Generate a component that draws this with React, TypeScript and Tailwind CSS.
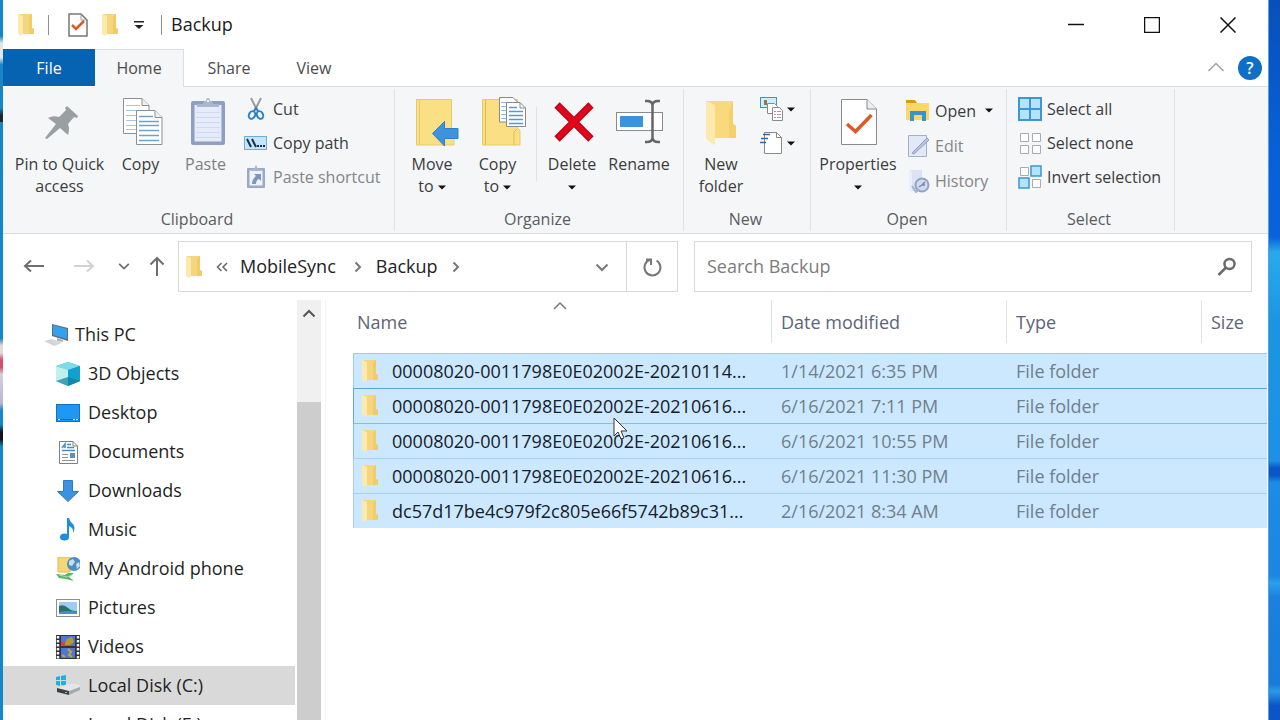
import { useState } from 'react';
import type { ReactNode } from 'react';

interface Entry {
  id: string;
  name: string;
  modified: string;
  line: string;
}

interface Place {
  label: string;
  icon: ReactNode;
}

const entries: Entry[] = [
  { id: 'a', name: '00008020-0011798E0E02002E-20210114...', modified: '1/14/2021 6:35 PM', line: 'border-[#99cbf0]' },
  { id: 'b', name: '00008020-0011798E0E02002E-20210616...', modified: '6/16/2021 7:11 PM', line: 'border-[#62a6dd]' },
  { id: 'c', name: '00008020-0011798E0E02002E-20210616...', modified: '6/16/2021 10:55 PM', line: 'border-[#80bfe8]' },
  { id: 'd', name: '00008020-0011798E0E02002E-20210616...', modified: '6/16/2021 11:30 PM', line: 'border-[#a9cdf2]' },
  { id: 'e', name: 'dc57d17be4c979f2c805e66f5742b89c31...', modified: '2/16/2021 8:34 AM', line: 'border-[#a9cdf2]' },
];

function FolderIcon({ className }: { className: string }) {
  return (
    <svg viewBox="0 0 16 22" className={className} aria-hidden="true">
      <path d="M1 0h13v14l2 1v5H4z" fill="#f6d67c" />
      <path d="M14 0v14l2 1v5h-5V3z" fill="#f0cb69" />
      <path d="M0 0l5 2v18l-2 2-3-2z" fill="#fce9ae" />
    </svg>
  );
}

function BigIcon({ children }: { children: ReactNode }) {
  return (
    <svg viewBox="-4 0 56 50" className="w-14 h-[50px] shrink-0" aria-hidden="true">
      {children}
    </svg>
  );
}

function SmallIcon({ children }: { children: ReactNode }) {
  return (
    <svg viewBox="0 0 24 24" className="w-6 h-6 shrink-0" aria-hidden="true">
      {children}
    </svg>
  );
}

function Caret() {
  return (
    <svg viewBox="0 0 8 5" className="w-2 h-[5px] inline-block" aria-hidden="true">
      <path d="M0 0.500h8L4 4.500z" fill="#111" />
    </svg>
  );
}

const pinIcon = (
  <BigIcon>
    <path
      d="M31 9L42 19l-1 2-3-1-6 7q2 5 0 11l-8-7L11 42l-2-1 11-14-8-6q5-3 11-1l7-7-1-2z"
      fill="#9a9fa2"
    />
  </BigIcon>
);

const copyIcon = (
  <BigIcon>
    <path d="M6.500 1.500H25l7 7V36.500H6.500z" fill="#fff" stroke="#8c8f93" />
    <path d="M25 1.500v7h7" fill="#eef0f2" stroke="#8c8f93" />
    <path d="M9 8.500h14M9 13.500h14M9 18.500h12M9 23.500h12M9 28.500h12M9 32.500h10" stroke="#a9c4df" />
    <path d="M19.500 13.500H38l7 7V47.500H19.500z" fill="#fff" stroke="#8c8f93" />
    <path d="M38 13.500v7h7" fill="#eef0f2" stroke="#8c8f93" />
    <path d="M22 19.500h14M22 24.500h20M22 28.500h20M22 33.500h20M22 38.500h20M22 43.500h20" stroke="#6ba3cf" strokeWidth="1.500" />
  </BigIcon>
);

const pasteIcon = (
  <BigIcon>
    <rect x="9" y="4" width="34" height="44" rx="2" fill="#8f9fc0" />
    <rect x="12.500" y="8" width="27" height="36.500" fill="#e6ebf9" />
    <path d="M14 15.500h24M14 20.500h24M14 25.500h24M14 30.500h24M14 35.500h24M14 40.500h24" stroke="#cfd8f0" />
    <path d="M15 10V7h6q0-3 3-3 0-3 2-3t2 3q3 0 3 3h6v3z" fill="#a9b6d2" />
    <circle cx="26" cy="4" r="1.200" fill="#f0f3fa" />
  </BigIcon>
);

const moveIcon = (
  <BigIcon>
    <path d="M8.500 2.500h35v29l2.500 2V48H8.500z" fill="#fbdf84" stroke="#eac968" />
    <path d="M11.500 3v45M36 48V35l3-2" stroke="#eccb67" fill="none" />
    <path d="M24.500 36.500L36.500 24.500v7H50v10H36.500v7.500z" fill="#3d94dd" stroke="#2f7fc6" />
  </BigIcon>
);

const copyToIcon = (
  <BigIcon>
    <path d="M8.500 2.500h35v29l2.500 2V48H8.500z" fill="#fbdf84" stroke="#eac968" />
    <path d="M11.500 3v45M40 48V35l3-3" stroke="#e4bc4c" fill="none" />
    <path d="M25.500 0.500H39l5 5v19.500H25.500z" fill="#fff" stroke="#86898d" />
    <path d="M27 5.500h9M27 9.500h9M27 13.500h9M27 17.500h9M27 21.500h9" stroke="#8db9e0" />
    <path d="M32.500 5.500H46l5.500 5.500v18.500h-19z" fill="#fff" stroke="#86898d" />
    <path d="M46 5.500V11h5.500" fill="none" stroke="#86898d" />
    <path d="M35 10.500h8M35 14.500h14M35 18.500h14M35 22.500h14M35 26.500h14" stroke="#4f9bd9" strokeWidth="1.500" />
  </BigIcon>
);

const deleteIcon = (
  <BigIcon>
    <path d="M9 8l34 34M43 8L9 42" stroke="#b8061b" strokeWidth="7.500" />
    <path d="M10 9l32 32M42 9L10 41" stroke="#e3061a" strokeWidth="5" />
  </BigIcon>
);

const renameIcon = (
  <BigIcon>
    <rect x="1.500" y="15.500" width="46" height="18" fill="#fff" stroke="#8a8a8a" />
    <rect x="5" y="19" width="23" height="11" fill="#3a93e0" />
    <path d="M30 4h2q5 0 5.500 4v33q-0.500 4-5.500 4h-2M45 4h-2q-5 0-5.500 4v33q0.500 4 5.500 4h2" stroke="#666" strokeWidth="2.500" fill="none" />
  </BigIcon>
);

const newFolderIcon = (
  <BigIcon>
    <path d="M9 4h27v23l3 2v12H17z" fill="#f8d97c" />
    <path d="M32 12l4-8v23l3 2v12h-7z" fill="#f3d06c" />
    <path d="M9 4l9 4v39l-1 1-8-6z" fill="#fdeaac" />
  </BigIcon>
);

const propertiesIcon = (
  <BigIcon>
    <path d="M7.500 2.500H33l9.500 9.500v35.500h-35z" fill="#fff" stroke="#8a8a8a" />
    <path d="M33 2.500V12h9.500" fill="#eee" stroke="#8a8a8a" />
    <path d="M13 27l8.500 7.500L37.500 18" stroke="#dd5a28" strokeWidth="3.500" fill="none" />
  </BigIcon>
);

const cutIcon = (
  <SmallIcon>
    <path d="M7 1l6 12M17 1l-6 12" stroke="#9a9da1" strokeWidth="2" />
    <ellipse cx="8" cy="18" rx="3" ry="4" transform="rotate(25 8 18)" fill="none" stroke="#2b82c4" strokeWidth="2" />
    <ellipse cx="16" cy="18" rx="3" ry="4" transform="rotate(-25 16 18)" fill="none" stroke="#2b82c4" strokeWidth="2" />
    <path d="M10 14l2-3 2 3" stroke="#2b82c4" strokeWidth="2" fill="none" />
  </SmallIcon>
);

const copyPathIcon = (
  <SmallIcon>
    <rect x="0.500" y="5.500" width="22" height="13" fill="#c5e5fa" stroke="#6aaede" />
    <path d="M3 8l4 8M8 8l4 8" stroke="#16324a" strokeWidth="2" />
    <path d="M13 15h2M16 15h2M19 15h2" stroke="#16324a" strokeWidth="2" />
  </SmallIcon>
);

const pasteShortcutIcon = (
  <SmallIcon>
    <rect x="3" y="3" width="18" height="20" rx="1" fill="#9aa9c6" />
    <rect x="5.500" y="5.500" width="13" height="15" fill="#eef2fc" />
    <path d="M7 6V4h3l2-4 2 4h3v2z" fill="#a9b6d2" />
    <path d="M10 9h7v7l-2-2q-3 1-3 5H8q0-5 4-8z" fill="#8195bb" />
  </SmallIcon>
);

const newItemIcon = (
  <SmallIcon>
    <rect x="0.500" y="0.500" width="16" height="10" fill="#d3ebfb" stroke="#4b8fc5" />
    <path d="M4 3h3v5H4z" fill="#8b7b4a" />
    <path d="M7.500 6.500h7l3 3v7h-10z" fill="#fff" stroke="#8a8a8a" />
    <path d="M12.500 10.500h7l3 3v10h-10z" fill="#fff" stroke="#8a8a8a" />
    <path d="M14 14.500h2M17 14.500h4M14 17.500h2M17 17.500h4M14 20.500h2M17 20.500h4" stroke="#c48aa6" />
  </SmallIcon>
);

const easyAccessIcon = (
  <SmallIcon>
    <path d="M4.500 1.500h12l5 5v16h-17z" fill="#fff" stroke="#8a8a8a" />
    <path d="M16.500 1.500v5h5" fill="none" stroke="#8a8a8a" />
    <path d="M3 3.500h7M1 7.500h7M0 11.500h6" stroke="#2b6cab" strokeWidth="1.500" />
  </SmallIcon>
);

const openIcon = (
  <SmallIcon>
    <path d="M0 2h9l2 2h12v17H0z" fill="#fbd766" />
    <path d="M0 1h9l2 3H0z" fill="#d99a17" />
    <path d="M4 22V12h16v10h-4v-6H8v6z" fill="#3d93c9" />
  </SmallIcon>
);

const editIcon = (
  <SmallIcon>
    <path d="M2.500 1.500h18v21h-18z" fill="#e2e8f8" stroke="#a3b0cc" />
    <path d="M6 19L21 4l2 2L8 20z" fill="#b9c5e0" stroke="#8f9fc2" />
  </SmallIcon>
);

const historyIcon = (
  <SmallIcon>
    <path d="M3 1h13v21H3z" fill="#dbe2f4" />
    <path d="M3 1l3 2v21l-3-3z" fill="#eaeffb" />
    <circle cx="16" cy="16" r="6.500" fill="#d0d9ee" stroke="#93a3c5" strokeWidth="2" />
    <path d="M13 18l3-2 3-3M16 16h3" stroke="#7688b2" strokeWidth="1.500" fill="none" />
    <path d="M6 17l4 6 3-3" fill="none" stroke="#a4b2d2" strokeWidth="2" />
  </SmallIcon>
);

const selectAllIcon = (
  <SmallIcon>
    <rect x="0" y="0" width="24" height="24" fill="#3c97d3" />
    <path d="M2 2h9v9H2zM13 2h9v9h-9zM2 13h9v9H2zM13 13h9v9h-9z" fill="#b5e2fd" />
  </SmallIcon>
);

const selectNoneIcon = (
  <SmallIcon>
    <path d="M2.500 2.500h8v8h-8zM14.500 2.500h8v8h-8zM2.500 14.500h8v8h-8zM14.500 14.500h8v8h-8z" fill="#fff" stroke="#a9abad" />
  </SmallIcon>
);

const invertIcon = (
  <SmallIcon>
    <path d="M2.500 2.500h8v8h-8zM14.500 14.500h8v8h-8z" fill="#fff" stroke="#a9abad" />
    <path d="M13 1h10v10H13zM1 13h10v10H1z" fill="#b5e2fd" stroke="#3c97d3" strokeWidth="1.500" />
  </SmallIcon>
);

const places: Place[] = [
  {
    label: '3D Objects',
    icon: (
      <>
        <path d="M12 0l12 4v15l-12 5L0 19V4z" fill="#27b1d3" />
        <path d="M12 0l12 4-12 4L0 4z" fill="#7fdbe8" />
        <path d="M0 4l12 4v16L0 19z" fill="#bff0ef" />
        <path d="M12 8l12-4v15l-12 5z" fill="#14a0cf" />
        <path d="M0 19l12-4 12 4-12 5z" fill="#0c7f9c" opacity="0.700" />
      </>
    ),
  },
  {
    label: 'Desktop',
    icon: (
      <>
        <rect x="0.500" y="3.500" width="23" height="17" fill="#1e97f5" stroke="#1771b8" />
        <path d="M1 18.500h22" stroke="#1267ad" />
        <path d="M2 18.500h2M17 18.500h2M20 18.500h2" stroke="#cfeaff" />
      </>
    ),
  },
  {
    label: 'Documents',
    icon: (
      <>
        <path d="M3.500 1.500H17l4.500 4.500v17.500h-18z" fill="#fff" stroke="#7d8184" />
        <path d="M17 1.500V6h4.500" fill="none" stroke="#7d8184" />
        <path d="M6 8l3-4v4M11 4.500h4M11 7.500h7M6 10.500h13" stroke="#3b8fd0" strokeWidth="1.500" fill="none" />
        <path d="M6 14.500h6M6 17.500h6M6 20.500h13" stroke="#8e9396" />
        <path d="M14 13h5v5h-5z" fill="#5a8fbd" />
      </>
    ),
  },
  {
    label: 'Downloads',
    icon: <path d="M7.500 1.500h9v11h6L12 22.500 1.500 12.500h6z" fill="#3d91e0" stroke="#2f79c3" />,
  },
  {
    label: 'Music',
    icon: (
      <>
        <path d="M11 0h2q1 4 4 6 3 4 0 9 1-5-4-7v11h-2z" fill="#1b8fdb" />
        <ellipse cx="8.500" cy="19" rx="4.500" ry="3.500" fill="#1b8fdb" />
      </>
    ),
  },
  {
    label: 'My Android phone',
    icon: (
      <>
        <path d="M2 0h12v15H2z" fill="#f6d778" stroke="#dfb84c" />
        <circle cx="18" cy="7" r="7" fill="#4a8fc2" />
        <path d="M13 4l4-2 2 3-3 4-3-1zM20 7l3-2 1 4-3 3z" fill="#c3dff0" />
        <path d="M0 17l9 1 3-2h6l-5 4 5 4-8-2-7-1z" fill="#54b562" />
        <path d="M3 18l8 2 5-2" stroke="#a8e0b0" fill="none" />
      </>
    ),
  },
  {
    label: 'Pictures',
    icon: (
      <>
        <rect x="0.500" y="3.500" width="23" height="17" fill="#fff" stroke="#8c9094" />
        <rect x="3" y="6" width="18" height="12" fill="#9dcdf2" />
        <path d="M3 10q5-2 9 2t9 3v3H3z" fill="#2f6f6b" />
        <path d="M3 16q9-2 18 0v2H3z" fill="#4a8ecb" />
      </>
    ),
  },
  {
    label: 'Videos',
    icon: (
      <>
        <path d="M0 0h24v24H0z" fill="#333" />
        <path d="M2 1v23M22 1v23" stroke="#f2f2f2" strokeWidth="2.500" strokeDasharray="2.500 1.500" />
        <path d="M5 1h14v10H5zM5 13h14v10H5z" fill="#4d78d3" />
        <path d="M11 4l5-2 2 5-4 3H8z" fill="#b79a2f" />
        <path d="M5 7h4v3H5z" fill="#c2495b" />
        <path d="M12 14l3 3-2 3 3 2M6 20l3 2" stroke="#c9a53a" strokeWidth="2" fill="none" />
      </>
    ),
  },
  {
    label: 'Local Disk (C:)',
    icon: (
      <>
        <path d="M0 3l4-1v4H0zM5 2l5-1v5H5zM0 7h4v5l-4-1zM5 7h5v5l-5-1z" fill="#1fb0e2" />
        <path d="M1 15l10-5h12l1 3-11 5z" fill="#e3e5e6" />
        <path d="M1 14l12 3v4L1 18z" fill="#3b3f42" />
        <path d="M13 17l11-4v3l-11 5z" fill="#a6aaac" />
        <path d="M9 18.500h2" stroke="#6ade77" />
      </>
    ),
  },
  {
    label: 'Local Disk (E:)',
    icon: (
      <>
        <path d="M1 15l9-5h13l1 3-11 5z" fill="#d6d8d9" />
        <path d="M1 15l12 2v4L1 19z" fill="#3b3f42" />
      </>
    ),
  },
];

function BigButton({ icon, children, width, disabled }: { icon: ReactNode; children: ReactNode; width: string; disabled?: boolean }) {
  return (
    <button
      type="button"
      disabled={disabled}
      className={`${width} shrink-0 flex flex-col items-center gap-[6px] pt-2 leading-[22px] whitespace-nowrap ${
        disabled ? 'text-[#7e7e80]' : 'text-[#3c3c3e]'
      }`}
    >
      {icon}
      <span className="block text-center">{children}</span>
    </button>
  );
}

function SmallButton({ icon, label, height, disabled, menu }: { icon: ReactNode; label: string; height: string; disabled?: boolean; menu?: boolean }) {
  return (
    <button
      type="button"
      disabled={disabled}
      className={`${height} flex items-center gap-[5px] whitespace-nowrap ${disabled ? 'text-[#858587]' : 'text-[#3c3c3e]'}`}
    >
      {icon}
      {label}
      {menu && (
        <span className="ml-1 flex">
          <Caret />
        </span>
      )}
    </button>
  );
}

function Group({ title, width, children }: { title: string; width: string; children: ReactNode }) {
  return (
    <section className={`${width} shrink-0 my-[2px] flex flex-col border-r border-[#dfe1e3]`}>
      <div className="flex h-[119px]">{children}</div>
      <h2 className="pr-[3px] text-center leading-[22px] text-[#5b5b5d]">{title}</h2>
    </section>
  );
}

function Chevron({ className, d }: { className: string; d: string }) {
  return (
    <svg viewBox="0 0 16 16" className={className} fill="none" stroke="currentColor" strokeWidth="2" aria-hidden="true">
      <path d={d} />
    </svg>
  );
}

const DOWN = 'M2.500 5.500L8 11l5.500-5.500';
const UP = 'M2.500 10.500L8 5l5.500 5.500';
const RIGHT = 'M5.500 3.500L10 8l-4.500 4.500';

export default function App() {
  const [search, setSearch] = useState('');
  const [current, setCurrent] = useState('Local Disk (C:)');

  return (
    <div className="relative h-screen overflow-hidden flex font-['Open_Sans','Noto_Sans',sans-serif] text-[16px]">
      {/* desktop showing on the left of the window */}
      <div className="w-[3px] shrink-0 bg-[linear-gradient(to_bottom,#1487c4_5%,#dfe6ee_6%,#dfe6ee_8%,#1487c4_9%,#1487c4_15%,#1b2733_16%,#1b2733_17%,#1487c4_17%,#1487c4_47%,#e6d9dd_48%,#e6d9dd_49%,#d0506a_50%,#d0506a_51%,#d9cfdd_52%,#b9b4d8_56%,#1487c4_57%,#1487c4_59%,#0c1420_60%,#0c1420_61%,#1487c4_62%)]" />
      <div className="flex-1 min-w-0 flex flex-col bg-white">
        <header className="h-[49px] shrink-0 flex items-center pl-[15px]">
          <FolderIcon className="w-4 h-[22px]" />
          <span className="ml-[14px] mr-[19px] w-px h-5 bg-[#8f8f8f]" />
          <button type="button" aria-label="Properties">
            <svg viewBox="0 0 20 24" className="w-5 h-6" fill="none" aria-hidden="true">
              <path d="M1 1h12l6 6v16H1z" fill="#fff" stroke="#777" strokeWidth="1.500" />
              <path d="M13 1v6h6" stroke="#999" />
              <path d="M4 12l4 4 8-8" stroke="#dc5a26" strokeWidth="2.500" />
            </svg>
          </button>
          <button type="button" aria-label="New folder" className="ml-[14px]">
            <FolderIcon className="w-4 h-[22px]" />
          </button>
          <button type="button" aria-label="Customize Quick Access Toolbar" className="ml-4">
            <svg viewBox="0 0 10 8" className="w-[10px] h-2" aria-hidden="true">
              <path d="M0 0h10v1.500H0zM0.500 4h9L5 8z" fill="#222" />
            </svg>
          </button>
          <span className="ml-[17px] mr-[9px] w-px h-5 bg-[#8f8f8f]" />
          <h1 className="text-[18px] text-[#1a1a1a]">Backup</h1>
          <div className="ml-auto flex items-center gap-[60px] pr-8 text-[#111]">
            <button type="button" aria-label="Minimize">
              <svg viewBox="0 0 16 16" className="w-4 h-4" aria-hidden="true">
                <path d="M0 7.500h16" stroke="currentColor" strokeWidth="1.500" />
              </svg>
            </button>
            <button type="button" aria-label="Maximize">
              <svg viewBox="0 0 16 16" className="w-4 h-4" fill="none" aria-hidden="true">
                <path d="M0.500 0.500h15v15h-15z" stroke="currentColor" strokeWidth="1.500" />
              </svg>
            </button>
            <button type="button" aria-label="Close">
              <svg viewBox="0 0 16 16" className="w-4 h-4" aria-hidden="true">
                <path d="M0.500 0.500l15 15M15.500 0.500l-15 15" stroke="currentColor" strokeWidth="1.500" />
              </svg>
            </button>
          </div>
        </header>

        <nav className="h-[38px] shrink-0 flex items-stretch text-[#4a4a4c]">
          <button type="button" className="w-[92px] mb-px bg-[#0563b1] text-white">
            File
          </button>
          <button type="button" className="w-[89px] pb-[2px] bg-[#f4f6f8] border-t border-r border-[#dcdee0]">
            Home
          </button>
          <div className="flex-1 flex items-stretch border-b border-[#dadcde]">
            <button type="button" className="w-[90px]">
              Share
            </button>
            <button type="button" className="w-20">
              View
            </button>
            <div className="ml-auto flex items-center gap-[13px] pr-[6px]">
              <button type="button" aria-label="Minimize the Ribbon" className="text-[#a2a2a2]">
                <svg viewBox="0 0 18 18" className="w-[18px] h-[18px]" fill="none" aria-hidden="true">
                  <path d="M1.500 12L9 4.500l7.500 7.500" stroke="currentColor" strokeWidth="1.500" />
                </svg>
              </button>
              <button
                type="button"
                aria-label="Help"
                className="w-6 h-6 rounded-full bg-[#0e6fc6] text-white font-semibold leading-6 text-center"
              >
                ?
              </button>
            </div>
          </div>
        </nav>

        <div className="h-[147px] shrink-0 flex bg-[#f4f6f8] border-b border-[#dadcde] overflow-hidden">
          <Group title="Clipboard" width="w-[392px]">
            <BigButton icon={pinIcon} width="ml-2 w-[97px]">
              Pin to Quick
              <br />
              access
            </BigButton>
            <BigButton icon={copyIcon} width="w-[65px]">
              Copy
            </BigButton>
            <BigButton icon={pasteIcon} width="w-[65px]" disabled>
              Paste
            </BigButton>
            <div className="pl-[6px] pt-[3px] flex flex-col items-start">
              <SmallButton height="h-[34px]" icon={cutIcon} label="Cut" />
              <SmallButton height="h-[34px]" icon={copyPathIcon} label="Copy path" />
              <SmallButton height="h-[34px]" icon={pasteShortcutIcon} label="Paste shortcut" disabled />
            </div>
          </Group>
          <Group title="Organize" width="w-[289px]">
            <BigButton icon={moveIcon} width="ml-1 w-[66px]">
              Move
              <br />
              to <Caret />
            </BigButton>
            <BigButton icon={copyToIcon} width="w-[65px]">
              Copy
              <br />
              to <Caret />
            </BigButton>
            <span className="ml-[6px] mt-[18px] w-px h-[74px] bg-[#dfe1e3]" />
            <BigButton icon={deleteIcon} width="w-[70px]">
              Delete
              <br />
              <Caret />
            </BigButton>
            <BigButton icon={renameIcon} width="w-16">
              Rename
            </BigButton>
          </Group>
          <Group title="New" width="w-[127px]">
            <BigButton icon={newFolderIcon} width="ml-[7px] w-[60px]">
              New
              <br />
              folder
            </BigButton>
            <div className="pl-[9px] pt-[3px] flex flex-col">
              <button type="button" aria-label="New item" className="h-[34px] flex items-center gap-[3px]">
                {newItemIcon}
                <Caret />
              </button>
              <button type="button" aria-label="Easy access" className="h-[34px] flex items-center gap-[3px]">
                {easyAccessIcon}
                <Caret />
              </button>
            </div>
          </Group>
          <Group title="Open" width="w-[196px]">
            <BigButton icon={propertiesIcon} width="ml-[3px] w-[88px]">
              Properties
              <br />
              <Caret />
            </BigButton>
            <div className="pl-1 pt-1 flex flex-col items-start">
              <SmallButton height="h-[35px]" icon={openIcon} label="Open" menu />
              <SmallButton height="h-[35px]" icon={editIcon} label="Edit" disabled />
              <SmallButton height="h-[35px]" icon={historyIcon} label="History" disabled />
            </div>
          </Group>
          <Group title="Select" width="w-[168px]">
            <div className="pl-[11px] pt-[3px] flex flex-col items-start">
              <SmallButton height="h-[34px]" icon={selectAllIcon} label="Select all" />
              <SmallButton height="h-[34px]" icon={selectNoneIcon} label="Select none" />
              <SmallButton height="h-[34px]" icon={invertIcon} label="Invert selection" />
            </div>
          </Group>
        </div>

        <div className="h-[66px] shrink-0 flex items-start pt-[7px] pl-5 pr-4 text-[18px] text-[#222]">
          <div className="w-[155px] h-[50px] shrink-0 flex items-center text-[#6e6e6e]">
            <button type="button" aria-label="Back">
              <svg viewBox="0 0 22 18" className="w-[22px] h-[18px]" fill="none" stroke="currentColor" strokeWidth="2" aria-hidden="true">
                <path d="M21 9H2M8 3.500L2 9l6 5.500" />
              </svg>
            </button>
            <button type="button" aria-label="Forward" disabled className="ml-7 text-[#d2d2d2]">
              <svg viewBox="0 0 22 18" className="w-[22px] h-[18px]" fill="none" stroke="currentColor" strokeWidth="2" aria-hidden="true">
                <path d="M1 9h19M14 3.500L20 9l-6 5.500" />
              </svg>
            </button>
            <button type="button" aria-label="Recent locations" className="ml-[22px]">
              <Chevron className="w-[14px] h-[14px]" d={DOWN} />
            </button>
            <button type="button" aria-label="Up" className="ml-[17px]">
              <svg viewBox="0 0 18 22" className="w-[18px] h-[22px]" fill="none" stroke="currentColor" strokeWidth="2" aria-hidden="true">
                <path d="M9 21V3M2.500 9.500L9 3l6.500 6.500" />
              </svg>
            </button>
          </div>
          <div className="w-[500px] h-[51px] flex items-stretch border border-[#d9d9d9]">
            <div className="flex-1 min-w-0 flex items-center pl-[7px]">
              <FolderIcon className="w-4 h-[22px] shrink-0" />
              <button type="button" aria-label="More locations" className="ml-[14px] text-[#666]">
                <svg viewBox="0 0 12 12" className="w-3 h-3" fill="none" stroke="currentColor" strokeWidth="1.500" aria-hidden="true">
                  <path d="M5.500 2L1.500 6l4 4M11 2L7 6l4 4" />
                </svg>
              </button>
              <button type="button" className="ml-3">
                MobileSync
              </button>
              <Chevron className="ml-[14px] w-4 h-4 text-[#777]" d={RIGHT} />
              <button type="button" className="ml-[10px]">
                Backup
              </button>
              <Chevron className="ml-[10px] w-4 h-4 text-[#777]" d={RIGHT} />
              <button type="button" aria-label="Previous locations" className="ml-auto mr-4 text-[#777]">
                <Chevron className="w-4 h-4" d={DOWN} />
              </button>
            </div>
            <button
              type="button"
              aria-label="Refresh"
              className="w-[51px] flex items-center justify-center border-l border-[#d9d9d9] text-[#777]"
            >
              <svg viewBox="0 0 20 20" className="w-5 h-5" fill="none" stroke="currentColor" strokeWidth="2" aria-hidden="true">
                <path d="M14.500 3.500A8 8 0 1 1 8 2.800M4 2.500h5v5.500" />
              </svg>
            </button>
          </div>
          <label className="ml-4 flex-1 min-w-0 h-[51px] flex items-center border border-[#d9d9d9] pl-3 pr-[14px]">
            <input
              type="text"
              aria-label="Search Backup"
              placeholder="Search Backup"
              value={search}
              onChange={(e) => setSearch(e.target.value)}
              className="flex-1 min-w-0 outline-none placeholder:text-[#7c7c7c]"
            />
            <svg viewBox="0 0 20 20" className="w-5 h-5 text-[#6a6a6a]" fill="none" stroke="currentColor" strokeWidth="2.500" aria-hidden="true">
              <circle cx="12.500" cy="7" r="5" />
              <path d="M9 10.500L1.500 18" />
            </svg>
          </label>
        </div>

        <div className="flex-1 min-h-0 flex text-[18px]">
          <aside className="w-[292px] shrink-0 overflow-hidden pt-[15px] text-[#1f1f1f]">
            <button type="button" className="w-full h-[39px] pl-10 flex items-center gap-[6px] whitespace-nowrap">
              <svg viewBox="0 0 26 24" className="w-[26px] h-6 shrink-0" aria-hidden="true">
                <path d="M9 1l16 4v13L9 13z" fill="#5f6b75" />
                <path d="M10 2l14 4v10L10 12z" fill="#35a0ee" />
                <path d="M14 15l6 2v2l-6-1z" fill="#a8b3bb" />
                <path d="M1 18l8-2 10 4-8 3z" fill="#d2d6d9" />
              </svg>
              This PC
            </button>
            <ul>
              {places.map((p) => (
                <li key={p.label}>
                  <button
                    type="button"
                    onClick={() => setCurrent(p.label)}
                    className={`w-full h-[39px] pl-[53px] flex items-center gap-2 whitespace-nowrap ${
                      p.label === current ? 'bg-[#d9d9d9]' : ''
                    }`}
                  >
                    <SmallIcon>{p.icon}</SmallIcon>
                    {p.label}
                  </button>
                </li>
              ))}
            </ul>
          </aside>

          <div className="ml-[2px] w-6 shrink-0 flex flex-col bg-[#f0f0f0]">
            <button type="button" aria-label="Scroll up" className="h-7 flex items-center justify-center text-[#555]">
              <Chevron className="w-4 h-4" d={UP} />
            </button>
            <div className="mt-[74px] flex-1 bg-[#cdcdcd]" />
          </div>

          <main className="ml-1 flex-1 min-w-0 overflow-hidden border-l border-[#f4f4f4] pl-[27px] pr-px">
            <table className="w-full table-fixed border-separate border-spacing-0 text-left">
              <colgroup>
                <col className="w-[419px]" />
                <col className="w-[235px]" />
                <col className="w-[195px]" />
                <col />
              </colgroup>
              <thead>
                <tr className="text-[#5d6478]">
                  <th className="relative p-0 pb-[10px] font-normal">
                    <div className="h-[43px] flex items-center pt-px pl-1 border-r border-[#e2e2e2]">Name</div>
                    <svg viewBox="0 0 14 8" className="absolute top-[2px] left-1/2 -ml-[10px] w-[14px] h-2" fill="none" aria-hidden="true">
                      <path d="M1 7l6-6 6 6" stroke="#7a7a7a" strokeWidth="1.500" />
                    </svg>
                  </th>
                  <th className="p-0 pb-[10px] font-normal">
                    <div className="h-[43px] flex items-center pt-px pl-[9px] border-r border-[#e2e2e2]">Date modified</div>
                  </th>
                  <th className="p-0 pb-[10px] font-normal">
                    <div className="h-[43px] flex items-center pt-px pl-[9px] border-r border-[#e2e2e2]">Type</div>
                  </th>
                  <th className="p-0 pb-[10px] font-normal">
                    <div className="h-[43px] flex items-center pt-px pl-[9px]">Size</div>
                  </th>
                </tr>
              </thead>
              <tbody>
                {entries.map((e) => (
                  <tr key={e.id} className="bg-[#cce8ff] whitespace-nowrap text-[#6f7f8c]">
                    <td className={`p-0 h-[35px] border-t border-l ${e.line}`}>
                      <div className="flex items-center pl-2 text-[#14202b]">
                        <FolderIcon className="w-4 h-[22px] shrink-0" />
                        <span className="ml-[14px]">{e.name}</span>
                      </div>
                    </td>
                    <td className={`p-0 pl-[9px] border-t ${e.line}`}>{e.modified}</td>
                    <td className={`p-0 pl-[9px] border-t ${e.line}`}>File folder</td>
                    <td className={`p-0 border-t ${e.line}`} />
                  </tr>
                ))}
              </tbody>
            </table>
          </main>
        </div>
      </div>
      {/* desktop showing on the right */}
      <div className="w-3 shrink-0 border-l border-[#5aa0e0] bg-[linear-gradient(to_bottom,#0a4fb8_0%,#0860d4_20%,#0a62dc_33%,#2aa9ea_35%,#1a96e0_45%,#1e90e6_64%,#0b56c4_65%,#0b56c4_66%,#1e8be4_67%,#1c86e0_80%,#2aa0ec_81%,#1c80dc_83%,#1a7ad8_95%,#2a9ae6_96%,#0b55c6_98%)]" />

      {/* mouse pointer */}
      <svg viewBox="0 0 16 24" className="absolute left-[613px] top-[417px] w-4 h-6" aria-hidden="true">
        <path d="M1 1v18l4-4 3 7 3-1-3-7h6z" fill="#fff" stroke="#333" />
      </svg>
    </div>
  );
}
